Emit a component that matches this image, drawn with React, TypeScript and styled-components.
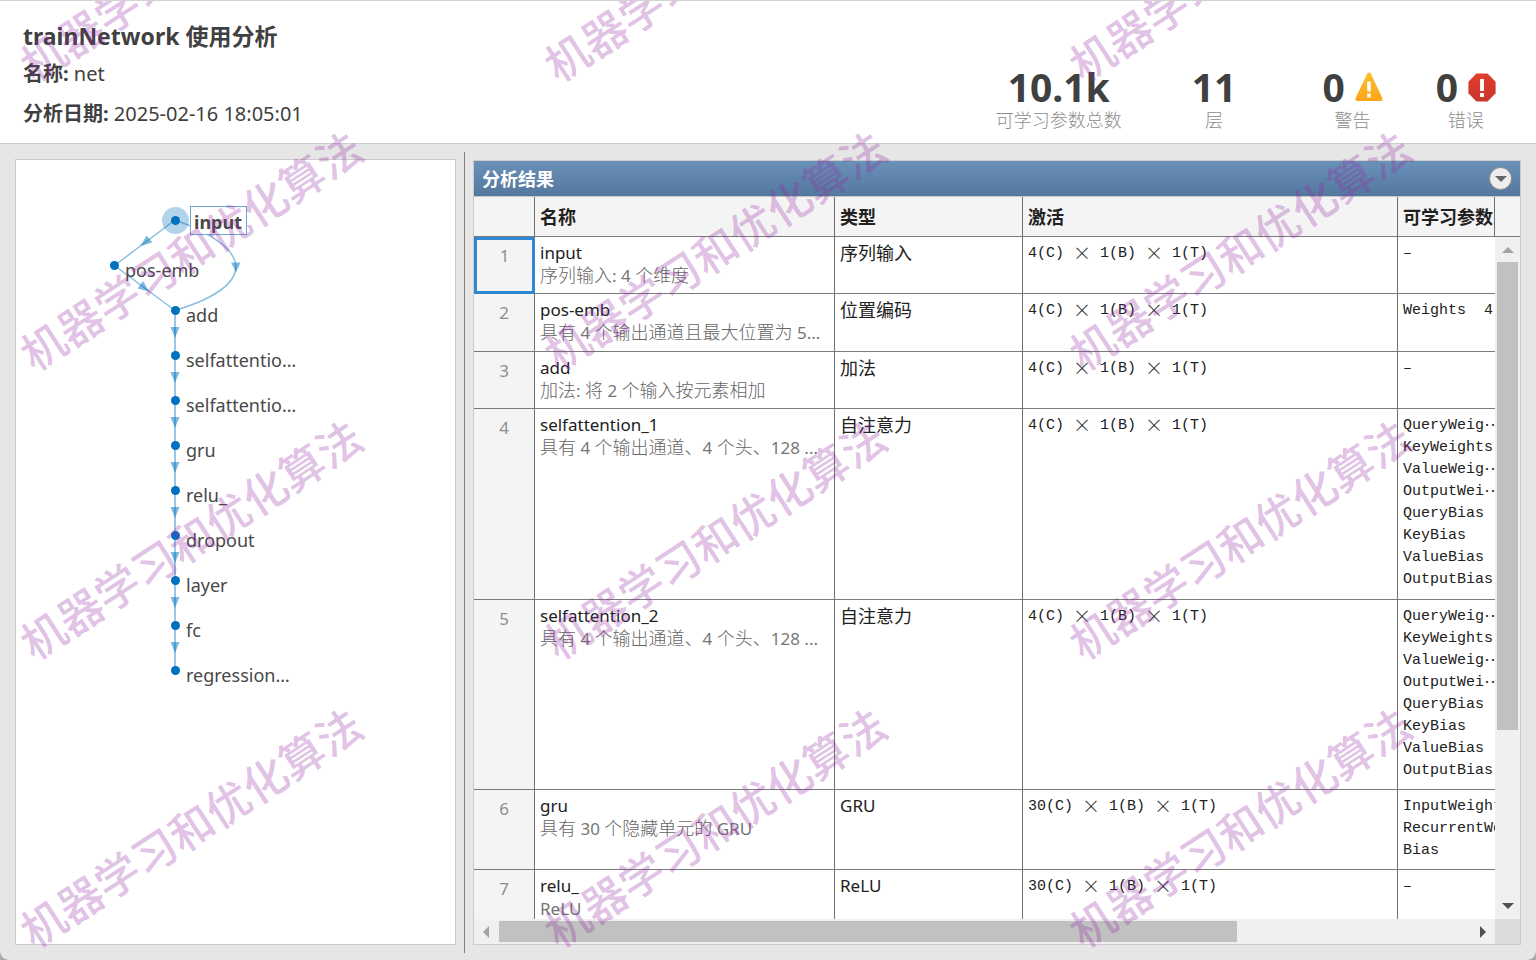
import React from 'react';
import styled, { createGlobalStyle, css } from 'styled-components';

const sans = "'Noto Sans', 'Noto Sans CJK SC', sans-serif";
const cjk = "'Noto Sans CJK SC', sans-serif";
const mono = "'Liberation Mono', 'Noto Sans CJK SC', monospace";

const Global = createGlobalStyle`
  * { box-sizing: border-box; }
  body { margin: 0; background: #a9a9a9; font-family: ${sans}; color: #404040; }
  h1, h2, p, dl, dd, dt { margin: 0; }
`;

const Page = styled.div`
  position: relative;
  display: flex;
  flex-direction: column;
  height: 100vh;
  overflow: hidden;
  background: #e6e6e6;
  border-top: 1px solid #d2d2d2;
  border-radius: 0 0 9px 9px;
`;

const Header = styled.header`
  display: flex;
  justify-content: space-between;
  align-items: flex-end;
  padding: 17px 40px 9px 23px;
  background: #fff;
  border-bottom: 1px solid #cdcdcd;
`;

const Title = styled.h1`
  font-size: 23px;
  line-height: 36px;
  font-weight: 700;
`;

const Meta = styled.p`
  font-size: 20px;
  line-height: 40px;
`;

const Stats = styled.dl`
  display: flex;
  padding-bottom: 1px;
`;

const Stat = styled.div<{ $gap: number }>`
  display: flex;
  flex-direction: column-reverse;
  align-items: center;
  margin-left: ${p => p.$gap}px;
`;

const StatValue = styled.dd`
  display: flex;
  align-items: center;
  gap: 10px;
  font-size: 39px;
  line-height: 40px;
  font-weight: 700;
`;

const StatLabel = styled.dt`
  font-size: 18px;
  line-height: 26px;
  font-weight: 300;
  color: #8c8c8c;
`;

const Main = styled.main`
  display: flex;
  flex: 1;
  min-height: 0;
  padding: 8px 15px 7px;
`;

const GraphPanel = styled.section`
  flex: 0 0 441px;
  margin: 7px 0 8px;
  background: #fff;
  border: 1px solid #cbcbcb;
`;

const Splitter = styled.div`
  flex: 0 0 1px;
  margin: 0 8px;
  background: #7f7f7f;
`;

const ResultPanel = styled.section`
  display: flex;
  flex: 1;
  flex-direction: column;
  min-width: 0;
  margin: 8px 0;
  background: #f0f0f0;
  border: 1px solid #cbcbcb;
`;

const PanelTitle = styled.div`
  position: relative;
  display: flex;
  flex: 0 0 36px;
  align-items: center;
  justify-content: space-between;
  padding: 0 8px;
  background: linear-gradient(#6a91b8, #54779d);
  border-bottom: 1px solid #c8c8c8;
  color: #fff;

  h2 { font-size: 18px; line-height: 34px; }
`;

const MenuButton = styled.button`
  display: flex;
  align-items: center;
  justify-content: center;
  width: 23px;
  height: 23px;
  padding: 0;
  border: 1px solid #8b8b8b;
  border-radius: 50%;
  background: #ededed;
`;

const Grid = styled.div`
  display: grid;
  flex: 1;
  grid-template: minmax(0, 1fr) 25px / minmax(0, 1fr) 25px;
  min-height: 0;
`;

const Viewport = styled.div`
  overflow: hidden;
  background: #fff;
`;

const Side = styled.div`
  display: flex;
  flex-direction: column;
`;

const SideHead = styled.div`
  flex: 0 0 40px;
  margin-left: -1px;
  background: #f4f4f4;
  border-left: 1px solid #6f6f6f;
  border-bottom: 1px solid #7a7a7a;
`;

const VerticalBar = styled.div`
  display: flex;
  flex: 1;
  flex-direction: column;
  align-items: stretch;
  padding: 0 2px;
  background: #f0f0f0;
`;

const HorizontalBar = styled.div`
  display: flex;
  align-items: center;
  padding: 2px 0;
  background: #f0f0f0;
`;

const ScrollButton = styled.button`
  display: flex;
  flex: 0 0 25px;
  align-items: center;
  justify-content: center;
  padding: 0;
  border: 0;
  background: transparent;
`;

const Track = styled.div`
  display: flex;
  flex: 1;
  align-self: stretch;
`;

const Thumb = styled.div<{ $vertical?: boolean }>`
  background: #c1c1c1;
  ${p => (p.$vertical ? css`width: 100%; height: 74%;` : css`width: 76%; height: 100%;`)}
`;

const Corner = styled.div`
  background: #dcdcdc;
`;

const Table = styled.table`
  width: 1343px;
  table-layout: fixed;
  border-collapse: separate;
  border-spacing: 0;
  font-size: 18px;
  line-height: 22px;
  color: #212121;
`;

const Col = styled.col<{ $w?: number }>`
  ${p => p.$w && css`width: ${p.$w}px;`}
`;

const HeadCell = styled.th`
  height: 40px;
  padding: 0 5px;
  background: #f4f4f4;
  border-right: 1px solid #6f6f6f;
  border-bottom: 1px solid #7a7a7a;
  text-align: left;
  font-weight: 700;
`;

const Row = styled.tr<{ $h: number }>`
  height: ${p => p.$h}px;
`;

const Cell = styled.td<{ $mono?: boolean }>`
  padding: 5px 5px 0;
  border-right: 1px solid #6f6f6f;
  border-bottom: 1px solid #7a7a7a;
  vertical-align: top;
  ${p => p.$mono && css`padding-top: 6px; font-family: ${mono}; font-size: 15px;`}
`;

const IndexCell = styled.th<{ $selected?: boolean }>`
  padding: 8px 0 0;
  background: #f4f4f4;
  border-right: 1px solid #6f6f6f;
  border-bottom: 1px solid #7a7a7a;
  vertical-align: top;
  font-size: 17px;
  font-weight: 400;
  color: #8e8e8e;
  ${p => p.$selected && css`border: 3px solid #2f88cf; padding-top: 5px;`}
`;

const LayerName = styled.div<{ $latin?: boolean }>`
  height: 22px;
  font-size: ${p => (p.$latin ? 17 : 18)}px;
`;

const LayerNote = styled.div`
  height: 22px;
  overflow: hidden;
  white-space: nowrap;
  font-weight: 300;
  color: #666;
`;

const LatinRun = styled.span`
  font-size: 17px;
  font-weight: 400;
  color: #767676;
`;

const WideGlyph = styled.span`
  display: inline-block;
  width: 18px;
  height: 22px;
  vertical-align: top;
  line-height: 18px;
  text-align: center;
  font-family: ${cjk};
  font-size: 18px;
  font-weight: 300;
`;

const ParamLine = styled.div`
  height: 22px;
  white-space: pre;
`;

const WatermarkLayer = styled.div`
  position: absolute;
  inset: -1px 0 0;
  overflow: hidden;
  pointer-events: none;
`;

const Watermark = styled.span<{ $x: number; $y: number }>`
  position: absolute;
  left: ${p => p.$x}px;
  top: ${p => p.$y}px;
  transform: translate(-50%, -50%) rotate(-33deg);
  white-space: nowrap;
  font-family: ${cjk};
  font-size: 44px;
  font-weight: 500;
  line-height: 60px;
  color: rgba(150, 42, 165, 0.3);
`;

type Layer = { name: string; note: string; type: string; channels: number; params: string[]; height: number };

const attention = [
  'QueryWeig⋯', 'KeyWeights', 'ValueWeig⋯', 'OutputWei⋯',
  'QueryBias', 'KeyBias', 'ValueBias', 'OutputBias',
];

const layers: Layer[] = [
  { name: 'input', note: '序列输入: 4 个维度', type: '序列输入', channels: 4, params: ['–'], height: 57 },
  { name: 'pos-emb', note: '具有 4 个输出通道且最大位置为 5...', type: '位置编码', channels: 4, params: ['Weights  4'], height: 58 },
  { name: 'add', note: '加法: 将 2 个输入按元素相加', type: '加法', channels: 4, params: ['–'], height: 57 },
  { name: 'selfattention_1', note: '具有 4 个输出通道、4 个头、128 ...', type: '自注意力', channels: 4, params: attention, height: 191 },
  { name: 'selfattention_2', note: '具有 4 个输出通道、4 个头、128 ...', type: '自注意力', channels: 4, params: attention, height: 190 },
  { name: 'gru', note: '具有 30 个隐藏单元的 GRU', type: 'GRU', channels: 30, params: ['InputWeights', 'RecurrentWeights', 'Bias'], height: 80 },
  { name: 'relu_', note: 'ReLU', type: 'ReLU', channels: 30, params: ['–'], height: 58 },
];

const chain = ['add', 'selfattentio…', 'selfattentio…', 'gru', 'relu_', 'dropout', 'layer', 'fc', 'regression…'];

const columns = ['', '名称', '类型', '激活', '可学习参数...'];
const watermarkColumns = [190, 714, 1239];
const watermarkRows = [-40, 249, 538, 826];

const isLatin = (s: string) => /^[\x20-\x7e]+$/.test(s);

/* Latin letters and digits run slightly smaller than the Chinese glyphs beside them. */
function Mixed({ text }: { text: string }) {
  return (
    <>
      {text.split(/([\x20-\x7e]+)/).filter(Boolean).map((run, i) =>
        isLatin(run) ? <LatinRun key={i}>{run}</LatinRun> : run,
      )}
    </>
  );
}

function Param({ text }: { text: string }) {
  if (text.endsWith('⋯')) {
    return <ParamLine>{text.slice(0, -1)}<WideGlyph>⋯</WideGlyph></ParamLine>;
  }
  return <ParamLine>{text}</ParamLine>;
}

function Arrow({ dir, dark = true }: { dir: 'up' | 'down' | 'left' | 'right'; dark?: boolean }) {
  const points = { up: '1,10 7,4 13,10', down: '1,3 7,9 13,3', left: '9,1 3,7 9,13', right: '4,1 10,7 4,13' }[dir];
  return (
    <svg width="14" height="14" aria-hidden="true">
      <polygon points={points} fill={dark ? '#505050' : '#a3a3a3'} />
    </svg>
  );
}

function WarningIcon() {
  return (
    <svg width="28" height="30" viewBox="0 0 28 30" aria-hidden="true">
      <defs>
        <linearGradient id="warn" x1="0" y1="0" x2="0" y2="1">
          <stop offset="0" stopColor="#fbc02a" />
          <stop offset="1" stopColor="#fea41a" />
        </linearGradient>
      </defs>
      <path d="M14 0.5 Q15.3 0.5 16 2 L27.6 26.6 Q28 29 26 29 H2 Q0 29 0.4 26.6 L12 2 Q12.7 0.5 14 0.5Z" fill="url(#warn)" />
      <path d="M12.2 9.5h3.6v10h-3.6zM12.2 21.5h3.6v4h-3.6z" fill="#fff" />
    </svg>
  );
}

function ErrorIcon() {
  return (
    <svg width="28" height="29" viewBox="0 0 28 29" aria-hidden="true">
      <defs>
        <linearGradient id="err" x1="0" y1="0" x2="0" y2="1">
          <stop offset="0" stopColor="#e23c2d" />
          <stop offset="1" stopColor="#c8372c" />
        </linearGradient>
      </defs>
      <path d="M8.4 0.5h11.2l8 8.2v11.6l-8 8.2H8.4l-8-8.2V8.7z" fill="url(#err)" />
      <path d="M12.1 6h3.8v12h-3.8zM12.1 20h3.8v4h-3.8z" fill="#fff" />
    </svg>
  );
}

function NetworkGraph() {
  return (
    <svg width="430" height="560" role="img" aria-label="网络图" fontFamily={sans} fontSize="18">
      <circle cx="159.5" cy="60.5" r="13.5" fill="#b3d3ea" />
      <g fill="none" stroke="#0072bd" strokeOpacity="0.45" strokeWidth="1.5">
        <path d="M159 60L98.500 105.500L159 150.500" />
        <path d="M159 60C199 74 219 91 220 106C220 125 194 140 159 150.500" />
        <path d="M159 150V510" strokeWidth="2" strokeOpacity="0.4" />
      </g>
      <g fill="#0072bd" fillOpacity="0.5">
        <path d="M124.500 86L130.500 75.500L136.500 82.500Z" />
        <path d="M133 131.500L121.500 128.500L127 121Z" />
        <path d="M220 112.500L215 102.500H224.500Z" />
        {chain.slice(1).map((_, i) => (
          <path key={i} d={`M159 ${178 + i * 45}L154.500 ${167 + i * 45}H163.500Z`} />
        ))}
      </g>
      <rect x="174.500" y="46.500" width="56" height="28" fill="#fff" stroke="#6ba9d4" />
      <g fill="#0072bd">
        <circle cx="159.500" cy="60.500" r="4.500" />
        <circle cx="98.500" cy="105.500" r="4.500" />
        {chain.map((_, i) => <circle key={i} cx="159.500" cy={150.5 + i * 45} r="4.500" />)}
      </g>
      <g fill="#484848">
        <text x="178" y="69" fontWeight="700">input</text>
        <text x="109" y="117">pos-emb</text>
        {chain.map((label, i) => <text key={i} x="170" y={162 + i * 45}>{label}</text>)}
      </g>
    </svg>
  );
}

export default function App() {
  return (
    <>
      <Global />
      <Page>
        <Header>
          <div>
            <Title>trainNetwork 使用分析</Title>
            <Meta><b>名称:</b> net</Meta>
            <Meta><b>分析日期:</b> 2025-02-16 18:05:01</Meta>
          </div>
          <Stats>
            <Stat $gap={0}><StatLabel>可学习参数总数</StatLabel><StatValue>10.1k</StatValue></Stat>
            <Stat $gap={70}><StatLabel>层</StatLabel><StatValue>11</StatValue></Stat>
            <Stat $gap={86}><StatLabel>警告</StatLabel><StatValue>0<WarningIcon /></StatValue></Stat>
            <Stat $gap={53}><StatLabel>错误</StatLabel><StatValue>0<ErrorIcon /></StatValue></Stat>
          </Stats>
        </Header>
        <Main>
          <GraphPanel><NetworkGraph /></GraphPanel>
          <Splitter />
          <ResultPanel>
            <PanelTitle>
              <h2>分析结果</h2>
              <MenuButton aria-label="菜单">
                <svg width="12" height="8" aria-hidden="true"><polygon points="0,1 12,1 6,7" fill="#666" /></svg>
              </MenuButton>
            </PanelTitle>
            <Grid>
              <Viewport>
                <Table>
                  <colgroup>
                    <Col $w={61} /><Col $w={300} /><Col $w={188} /><Col $w={375} /><Col />
                  </colgroup>
                  <thead>
                    <tr>{columns.map((c, i) => <HeadCell key={i} scope="col">{c}</HeadCell>)}</tr>
                  </thead>
                  <tbody>
                    {layers.map((l, i) => (
                      <Row key={l.name} $h={l.height}>
                        <IndexCell scope="row" $selected={i === 0}>{i + 1}</IndexCell>
                        <Cell>
                          <LayerName $latin>{l.name}</LayerName>
                          <LayerNote><Mixed text={l.note} /></LayerNote>
                        </Cell>
                        <Cell><LayerName $latin={isLatin(l.type)}>{l.type}</LayerName></Cell>
                        <Cell $mono>
                          {l.channels}(C) <WideGlyph>×</WideGlyph> 1(B) <WideGlyph>×</WideGlyph> 1(T)
                        </Cell>
                        <Cell $mono>{l.params.map(p => <Param key={p} text={p} />)}</Cell>
                      </Row>
                    ))}
                  </tbody>
                </Table>
              </Viewport>
              <Side>
                <SideHead />
                <VerticalBar>
                  <ScrollButton aria-label="向上滚动"><Arrow dir="up" dark={false} /></ScrollButton>
                  <Track><Thumb $vertical /></Track>
                  <ScrollButton aria-label="向下滚动"><Arrow dir="down" /></ScrollButton>
                </VerticalBar>
              </Side>
              <HorizontalBar>
                <ScrollButton aria-label="向左滚动"><Arrow dir="left" dark={false} /></ScrollButton>
                <Track><Thumb /></Track>
                <ScrollButton aria-label="向右滚动"><Arrow dir="right" /></ScrollButton>
              </HorizontalBar>
              <Corner />
            </Grid>
          </ResultPanel>
        </Main>
        <WatermarkLayer aria-hidden="true">
          {watermarkRows.map(y => watermarkColumns.map(x => (
            <Watermark key={`${x}-${y}`} $x={x} $y={y}>机器学习和优化算法</Watermark>
          )))}
        </WatermarkLayer>
      </Page>
    </>
  );
}
